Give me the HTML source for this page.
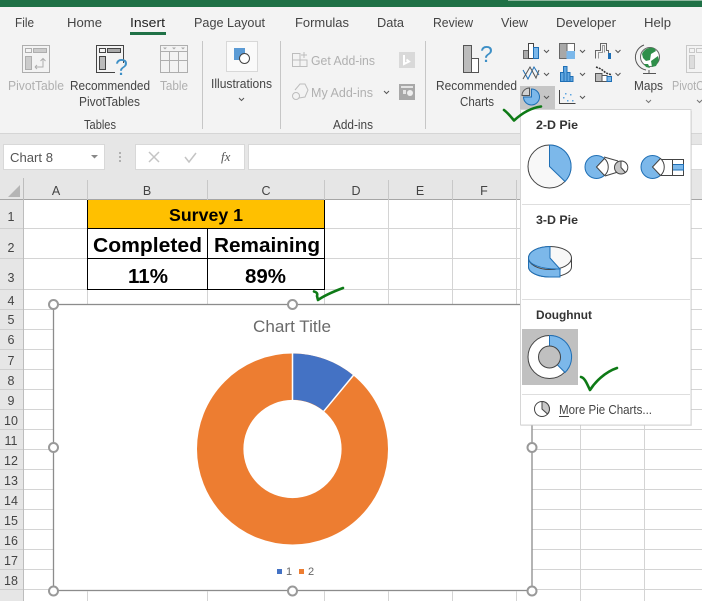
<!DOCTYPE html>
<html><head><meta charset="utf-8"><style>
html,body{margin:0;padding:0;background:#fff}
svg{display:block}
text{font-family:"Liberation Sans",sans-serif}
.t{font-size:13px;fill:#444}
.r{font-size:12.5px;fill:#444}
.g{font-size:12.5px;fill:#b0b0b0}
.h{font-size:12.5px;fill:#444;text-anchor:middle}
.b{font-size:20.5px;font-weight:bold;fill:#000}
.p{font-size:12px;font-weight:bold;fill:#333}
.l{stroke:#d4d4d4;stroke-width:1}
</style></head><body>
<svg width="702" height="601" viewBox="0 0 702 601" xmlns="http://www.w3.org/2000/svg">
<rect width="702" height="601" fill="#fff"/>
<!-- grid -->
<g class="l">
<path d="M23 228.5H702M23 258.5H702M23 289.5H702M23 309.5H702M23 329.5H702M23 349.5H702M23 369.5H702M23 389.5H702M23 409.5H702M23 429.5H702M23 449.5H702M23 469.5H702M23 489.5H702M23 509.5H702M23 529.5H702M23 549.5H702M23 569.5H702M23 589.5H702" fill="none"/>
<path d="M87.5 200V601M207.5 200V601M324.5 200V601M388.5 200V601M452.5 200V601M516.5 200V601M580.5 200V601M644.5 200V601" fill="none"/>
</g>
<!-- ribbon -->
<rect y="0" width="702" height="134" fill="#f3f3f3"/>
<rect y="0" width="702" height="7" fill="#1f7146"/>
<rect x="508" y="0" width="194" height="1" fill="#8fb8a0"/>
<rect y="133" width="702" height="45" fill="#e6e6e6"/>
<rect y="133" width="702" height="1" fill="#d5d5d5"/>
<g class="t">
<text x="15" y="27" textLength="19" lengthAdjust="spacingAndGlyphs">File</text>
<text x="67" y="27" textLength="35" lengthAdjust="spacingAndGlyphs">Home</text>
<text x="130" y="27" textLength="35" lengthAdjust="spacingAndGlyphs" style="fill:#222">Insert</text>
<text x="194" y="27" textLength="71" lengthAdjust="spacingAndGlyphs">Page Layout</text>
<text x="295" y="27" textLength="54" lengthAdjust="spacingAndGlyphs">Formulas</text>
<text x="377" y="27" textLength="27" lengthAdjust="spacingAndGlyphs">Data</text>
<text x="433" y="27" textLength="40" lengthAdjust="spacingAndGlyphs">Review</text>
<text x="501" y="27" textLength="27" lengthAdjust="spacingAndGlyphs">View</text>
<text x="556" y="27" textLength="60" lengthAdjust="spacingAndGlyphs">Developer</text>
<text x="644" y="27" textLength="27" lengthAdjust="spacingAndGlyphs">Help</text>
</g>
<rect x="130" y="32" width="36" height="3" fill="#1f7146"/>
<path d="M202.5 41V129M280.5 41V129M425.5 41V129" stroke="#c6c6c6" fill="none"/>
<!-- ribbon labels -->
<text class="g" x="8" y="90" textLength="56" lengthAdjust="spacingAndGlyphs">PivotTable</text>
<text class="r" x="70" y="90" textLength="80" lengthAdjust="spacingAndGlyphs">Recommended</text>
<text class="r" x="79" y="106" textLength="61" lengthAdjust="spacingAndGlyphs">PivotTables</text>
<text class="g" x="160" y="90" textLength="28" lengthAdjust="spacingAndGlyphs">Table</text>
<text class="r" x="84" y="129" textLength="32" lengthAdjust="spacingAndGlyphs">Tables</text>
<text class="r" x="211" y="88" textLength="61" lengthAdjust="spacingAndGlyphs">Illustrations</text>
<path d="M239 98l2.5 2.5 2.5-2.5" fill="none" stroke="#555"/>
<text class="g" x="311" y="65" textLength="64" lengthAdjust="spacingAndGlyphs">Get Add-ins</text>
<text class="g" x="311" y="97" textLength="62" lengthAdjust="spacingAndGlyphs">My Add-ins</text>
<path d="M384 91l2.5 2.5 2.5-2.5" fill="none" stroke="#555"/>
<text class="r" x="333" y="129" textLength="40" lengthAdjust="spacingAndGlyphs">Add-ins</text>
<text class="r" x="436" y="90" textLength="81" lengthAdjust="spacingAndGlyphs">Recommended</text>
<text class="r" x="460" y="106" textLength="34" lengthAdjust="spacingAndGlyphs">Charts</text>
<text class="r" x="634" y="90" textLength="29" lengthAdjust="spacingAndGlyphs">Maps</text>
<text class="g" x="672" y="90" textLength="32" lengthAdjust="spacingAndGlyphs">PivotC</text>
<path d="M646 100l2.5 2.5 2.5-2.5M697 100l2.5 2.5 2.5-2.5" fill="none" stroke="#777"/>
<!-- PivotTable icon -->
<g fill="none" stroke="#aeaeae">
<rect x="22.5" y="45.5" width="27" height="27"/>
<rect x="25.5" y="48.5" width="6" height="4"/><rect x="33.5" y="48.5" width="13" height="4" fill="#ccc"/>
<rect x="25.5" y="56.5" width="6" height="13" fill="#ccc"/>
<path d="M35 67h8v-8M40.5 61l2.5-2.5 2.5 2.5M35 67l2-2M35 67l2 2"/>
</g>
<!-- Recommended PivotTables icon -->
<g fill="none" stroke="#444">
<path d="M123.5 63V45.5H96.5V72.5H115"/>
<rect x="99.5" y="48.5" width="6" height="4"/><rect x="107.5" y="48.5" width="13" height="4" fill="#aaa"/>
<rect x="99.5" y="56.5" width="6" height="13" fill="#bbb"/>
</g>
<text x="115" y="75" style="font-size:23px;fill:#3d8fc6">?</text>
<!-- Table icon -->
<g fill="none" stroke="#aeaeae">
<rect x="160.5" y="45.5" width="27" height="27"/>
<path d="M160.5 51.5H187.5M160.5 60.5H187.5M169.5 51.5V72.5M178.5 51.5V72.5"/>
<path d="M163 47.5h4l-2 2zM172 47.5h4l-2 2zM181 47.5h4l-2 2z" fill="#aaa" stroke="none"/>
</g>
<!-- Illustrations -->
<rect x="226.5" y="41.5" width="31" height="30" fill="#fafafa" stroke="#d8d8d8"/>
<path d="M234 48h11v12h-11z" fill="#5b9bd5"/>
<circle cx="244.5" cy="58.5" r="5" fill="#fff" stroke="#444"/>
<!-- Add-ins icons -->
<g fill="none" stroke="#bdbdbd">
<path d="M292.5 53.5H300V66.5H292.5ZM292.5 60H307V66.5H300M304 52V58M301 55H307"/>
<path d="M295 90L300 84H305L308 90L305 97L299 98"/>
<circle cx="296" cy="96" r="3.5"/>
</g>
<rect x="399" y="52" width="16" height="16" fill="#d9d9d9"/>
<path d="M404 55v9l5-2.5-2.5-2" fill="none" stroke="#fff" stroke-width="2"/>
<rect x="399" y="84" width="16" height="16" fill="#a8a8a8"/>
<rect x="401" y="86" width="12" height="2" fill="#e4e4e4"/>
<circle cx="410" cy="93" r="3" fill="#eee"/><rect x="403" y="90" width="3" height="4" fill="#e4e4e4"/>
<!-- Recommended Charts icon -->
<rect x="463.5" y="45.5" width="8" height="27" fill="#bcbcbc" stroke="#555"/>
<rect x="471.5" y="58.5" width="7" height="14" fill="#fff" stroke="#555"/>
<text x="480" y="62" style="font-size:23px;fill:#3d8fc6">?</text>
<!-- chart gallery -->
<path d="M523.5 50.5h5v8h-5z" fill="#aaa" stroke="#666"/>
<path d="M528.5 43.5h5v15h-5z" fill="#fff" stroke="#444"/>
<path d="M533.5 47.5h5v11h-5z" fill="#7cb8ea" stroke="#1f6fb5"/>
<path d="M559.5 43.5h7.5v15h-7.5z" fill="#a8a8a8" stroke="#666"/>
<path d="M567 43.5h7.5v8h-7.5z" fill="#fff" stroke="#666"/>
<path d="M567 51.5h7.5v7h-7.5z" fill="#7cb8ea" stroke="#7cb8ea"/>
<path d="M595.5 58.5V50.5H600.5V43.5H606.5V50.5H608.5V55" fill="none" stroke="#666"/>
<path d="M598.5 58.5V52.5H602.5V45.5H604.5V52.5" fill="none" stroke="#999"/>
<path d="M608 53h3v6h-3z" fill="#1f6fb5"/>
<path d="M523 70l5 9 6-12 5 8" fill="none" stroke="#1f6fb5"/>
<path d="M523 79l7-12 6 11 3-8" fill="none" stroke="#555"/>
<path d="M560.5 81.5V72.5H563.5V66.5H567V72.5H570V76.5H573V81.5Z" fill="#5fa6e0" stroke="#1f6fb5"/>
<path d="M564 72.5V81.5M567 72.5V81.5M570 76.5V81.5" stroke="#1f6fb5"/>
<path d="M596 67l5 2 5 4 6 2" stroke="#333" fill="none" stroke-width="1.5" stroke-dasharray="2 1"/>
<path d="M595.5 81.5v-8h6.5v8z" fill="#bbb" stroke="#555"/>
<path d="M602 81.5v-6h5v6z" fill="#fff" stroke="#555"/>
<path d="M607 81.5v-5h4.5v5z" fill="#7cb8ea" stroke="#1f6fb5"/>
<rect x="520" y="86" width="35" height="24" fill="#c6c6c6"/>
<path d="M559.5 90v13.5h16" fill="none" stroke="#444"/>
<g fill="#5fa6e0"><rect x="563" y="97" width="1.5" height="1.5"/><rect x="567" y="100" width="1.5" height="1.5"/><rect x="570" y="94" width="1.5" height="1.5"/><rect x="565" y="93" width="1.5" height="1.5"/><rect x="572" y="100" width="1.5" height="1.5"/></g>
<path d="M529.5 95.5V88A7.5 7.5 0 0 0 522 95.5Z" fill="#d2d2d2" stroke="#555"/>
<path d="M531.5 97H523.5A8 8 0 1 0 531.5 89Z" fill="#7cb8ea" stroke="#1f6fb5"/>
<path d="M544 50l2.5 2.5 2.5-2.5M544 73l2.5 2.5 2.5-2.5M544 96l2.5 2.5 2.5-2.5M580 50l2.5 2.5 2.5-2.5M580 73l2.5 2.5 2.5-2.5M580 96l2.5 2.5 2.5-2.5M615.5 50l2.5 2.5 2.5-2.5M615.5 73l2.5 2.5 2.5-2.5" fill="none" stroke="#555"/>
<!-- Maps globe -->
<circle cx="650" cy="57" r="9.5" fill="#fff" stroke="#666"/>
<path d="M642 54c2-5 7-7 12-6l2 3-5 3-1 6-4 1-3-3zM651 61l7-5 1 4-3 6-4 1zM644 64l4 0 2 4-4-1z" fill="#2f8f4a"/>
<path d="M644 45a13 13 0 0 0 2 25M649 70v3M643 73.5h13" fill="none" stroke="#555"/>
<!-- PivotChart faint -->
<g fill="none" stroke="#c8c8c8"><path d="M702 45.5H686.5V72.5H702"/><rect x="689.5" y="48.5" width="5" height="4"/><rect x="696.5" y="48.5" width="6" height="4"/><rect x="689.5" y="55.5" width="5" height="13" fill="#ddd"/></g>
<!-- formula bar -->
<rect x="3.5" y="144.5" width="101" height="25" fill="#fff" stroke="#d8d8d8"/>
<text x="10" y="162" textLength="43" lengthAdjust="spacingAndGlyphs" style="font-size:13px;fill:#555">Chart 8</text>
<path d="M91 155h7l-3.5 3.5z" fill="#888"/>
<g fill="#b0b0b0"><rect x="119" y="152" width="2" height="2"/><rect x="119" y="156" width="2" height="2"/><rect x="119" y="160" width="2" height="2"/></g>
<rect x="135.5" y="144.5" width="109" height="25" fill="#fff" stroke="#d8d8d8"/>
<rect x="248.5" y="144.5" width="460" height="25" fill="#fff" stroke="#d8d8d8"/>
<path d="M149 152l10 10M159 152l-10 10" stroke="#c4c4c4" stroke-width="1.5" fill="none"/>
<path d="M185 157l4 5 7-9" stroke="#c4c4c4" stroke-width="1.5" fill="none"/>
<text x="221" y="161" style="font-family:'Liberation Serif',serif;font-style:italic;font-size:13px;fill:#555">fx</text>
<!-- headers -->
<rect y="178" width="702" height="22" fill="#e6e6e6"/>
<rect y="200" width="23" height="401" fill="#e6e6e6"/>
<path d="M0 199.5H702" stroke="#a6a6a6"/>
<path d="M23.5 178V601" stroke="#bdbdbd"/>
<path d="M87.5 180V200M207.5 180V200M324.5 180V200M388.5 180V200M452.5 180V200M516.5 180V200" stroke="#c8c8c8"/>
<path d="M20 185v12H8z" fill="#b5b5b5"/>
<path d="M0 228.5H23M0 258.5H23M0 289.5H23M0 309.5H23M0 329.5H23M0 349.5H23M0 369.5H23M0 389.5H23M0 409.5H23M0 429.5H23M0 449.5H23M0 469.5H23M0 489.5H23M0 509.5H23M0 529.5H23M0 549.5H23M0 569.5H23M0 589.5H23" stroke="#cfcfcf"/>
<g class="h">
<text x="56" y="195">A</text><text x="147" y="195">B</text><text x="266" y="195">C</text><text x="356" y="195">D</text><text x="420" y="195">E</text><text x="484" y="195">F</text>
<text x="11" y="221">1</text><text x="11" y="252">2</text><text x="11" y="282">3</text><text x="11" y="305">4</text><text x="11" y="324">5</text><text x="11" y="344">6</text><text x="11" y="365">7</text><text x="11" y="385">8</text><text x="11" y="405">9</text><text x="11" y="425">10</text><text x="11" y="445">11</text><text x="11" y="465">12</text><text x="11" y="485">13</text><text x="11" y="505">14</text><text x="11" y="525">15</text><text x="11" y="545">16</text><text x="11" y="565">17</text><text x="11" y="585">18</text>
</g>
<!-- table -->
<rect x="87.5" y="200" width="237" height="28.5" fill="#ffc000"/>
<path d="M87.5 200V289.5H324.5V200M87.5 228.5H324.5M87.5 258.5H324.5M207.5 228.5V289.5" fill="none" stroke="#000"/>
<text class="b" x="169" y="221" textLength="74" lengthAdjust="spacingAndGlyphs" style="font-size:17.5px">Survey 1</text>
<text class="b" x="93" y="252" textLength="109" lengthAdjust="spacingAndGlyphs">Completed</text>
<text class="b" x="214" y="252" textLength="106" lengthAdjust="spacingAndGlyphs">Remaining</text>
<text class="b" x="128" y="283" textLength="40" lengthAdjust="spacingAndGlyphs">11%</text>
<text class="b" x="245" y="283" textLength="41" lengthAdjust="spacingAndGlyphs">89%</text>
<!-- chart -->
<rect x="53.5" y="304.5" width="478.5" height="286" fill="#fff" stroke="#8c8c8c" stroke-width="1.3"/>
<path d="M87.5 591V601M207.5 591V601M324.5 591V601M388.5 591V601M452.5 591V601M516.5 591V601" stroke="#d4d4d4"/>
<text x="253" y="332" textLength="78" lengthAdjust="spacingAndGlyphs" style="font-size:17px;fill:#6a6a6a">Chart Title</text>
<circle cx="292.5" cy="449" r="72.3" fill="none" stroke="#ed7d31" stroke-width="46.4"/>
<path d="M292.5 353.5A95.5 95.5 0 0 1 353.4 375.5L323.9 411.1A49.2 49.2 0 0 0 292.5 399.8Z" fill="#4472c4"/>
<path d="M292.5 353V400M353.7 375L323.7 411.3" stroke="#fff" stroke-width="1.5"/>
<rect x="277" y="569" width="5" height="5" fill="#4472c4"/>
<text x="286" y="575" style="font-size:11px;fill:#666">1</text>
<rect x="299" y="569" width="5" height="5" fill="#ed7d31"/>
<text x="308" y="575" style="font-size:11px;fill:#666">2</text>
<g fill="#fff" stroke="#999" stroke-width="2">
<circle cx="53.5" cy="304.5" r="4.5"/><circle cx="292.5" cy="304.5" r="4.5"/><circle cx="532" cy="304.5" r="4.5"/>
<circle cx="53.5" cy="447.5" r="4.5"/><circle cx="532" cy="447.5" r="4.5"/>
<circle cx="53.5" cy="591" r="4.5"/><circle cx="292.5" cy="591" r="4.5"/><circle cx="532" cy="591" r="4.5"/>
</g>
<!-- popup -->
<rect x="521" y="111" width="171" height="315" fill="#000" opacity=".08"/>
<rect x="520.5" y="109.5" width="170.5" height="315.5" fill="#fff" stroke="#d6d6d6"/>
<text class="p" x="536" y="129" textLength="42" lengthAdjust="spacingAndGlyphs">2-D Pie</text>
<text class="p" x="536" y="224" textLength="42" lengthAdjust="spacingAndGlyphs">3-D Pie</text>
<text class="p" x="536" y="319" textLength="56" lengthAdjust="spacingAndGlyphs">Doughnut</text>
<path d="M522 204.5H690M522 299.5H690M522 394.5H690" stroke="#dedede"/>
<!-- 2D pie -->
<circle cx="549.5" cy="166.5" r="21.5" fill="#f8f8f8" stroke="#444"/>
<path d="M549.5 166.500V145A21.5 21.5 0 0 1 565 181.500Z" fill="#7cb8ea" stroke="#1f6fb5"/>
<!-- pie of pie -->
<path d="M604 157l14 4M605 176l13-4" fill="none" stroke="#444"/>
<circle cx="596.5" cy="167" r="11.5" fill="#7cb8ea" stroke="#1f6fb5"/>
<path d="M596.5 167L604.5 158.5A11.5 11.5 0 0 1 604.5 175.5Z" fill="#fff" stroke="#444"/>
<circle cx="621" cy="167.5" r="6.5" fill="#c4c4c4" stroke="#444"/>
<path d="M621 167.5V161A6.5 6.5 0 0 1 625.5 172.5Z" fill="#fff" stroke="#444"/>
<!-- bar of pie -->
<rect x="661.5" y="159.5" width="22" height="16" fill="#fff" stroke="#444"/>
<rect x="672.5" y="164.5" width="11" height="5.5" fill="#7cb8ea" stroke="#1f6fb5"/>
<path d="M672.5 159.5V175.5" stroke="#444"/>
<circle cx="652.5" cy="167" r="11.5" fill="#7cb8ea" stroke="#1f6fb5"/>
<path d="M652.5 167L660.5 158.5A11.5 11.5 0 0 1 660.5 175.5Z" fill="#fff" stroke="#444"/>
<!-- 3D pie -->
<path d="M528.5 258v9a21.5 10 0 0 0 43 0v-9z" fill="#fff" stroke="#444"/>
<path d="M528.5 260v7c0 5 9 10 21 10h10.5v-11z" fill="#7cb8ea" stroke="#1f6fb5"/>
<ellipse cx="550" cy="258" rx="21.5" ry="11.5" fill="#f8f8f8" stroke="#444"/>
<path d="M550 258V246.5A21.5 11.5 0 0 0 528.5 258C528.5 264 540 269.5 560 269Z" fill="#7cb8ea" stroke="#1f6fb5"/>
<!-- doughnut -->
<rect x="522" y="329" width="56" height="56" fill="#c0c0c0"/>
<circle cx="549.5" cy="357" r="21.5" fill="#fff" stroke="#444"/>
<path d="M549.5 335.5A21.5 21.5 0 0 1 565 372.5L557 364.5A11 11 0 0 0 549.5 346Z" fill="#7cb8ea" stroke="#1f6fb5"/>
<circle cx="549.5" cy="357" r="11" fill="#c0c0c0" stroke="#444"/>
<!-- more -->
<circle cx="542" cy="409" r="7.5" fill="#fff" stroke="#444"/>
<path d="M542 409V401.5A7.5 7.5 0 0 1 547.5 414Z" fill="#c8c8c8" stroke="#444"/>
<text x="559" y="414" textLength="93" lengthAdjust="spacingAndGlyphs" style="font-size:12.5px;fill:#444">More Pie Charts...</text>
<path d="M559 416.5H569" stroke="#444"/>
<!-- checkmarks -->
<g fill="none" stroke="#0e7a16" stroke-width="2.6" stroke-linecap="round" stroke-linejoin="round">
<path d="M504 110C508 113 511 117 514 120.5C520 115 530 108 541 106.5"/>
<path d="M314 291.5C316 292 318 293 317 296L318 300C325 295 335 291 343 288"/>
<path d="M581 377C585 378 587 384 590 390C595 382 605 372 617 368"/>
</g>
</svg>
</body></html>
